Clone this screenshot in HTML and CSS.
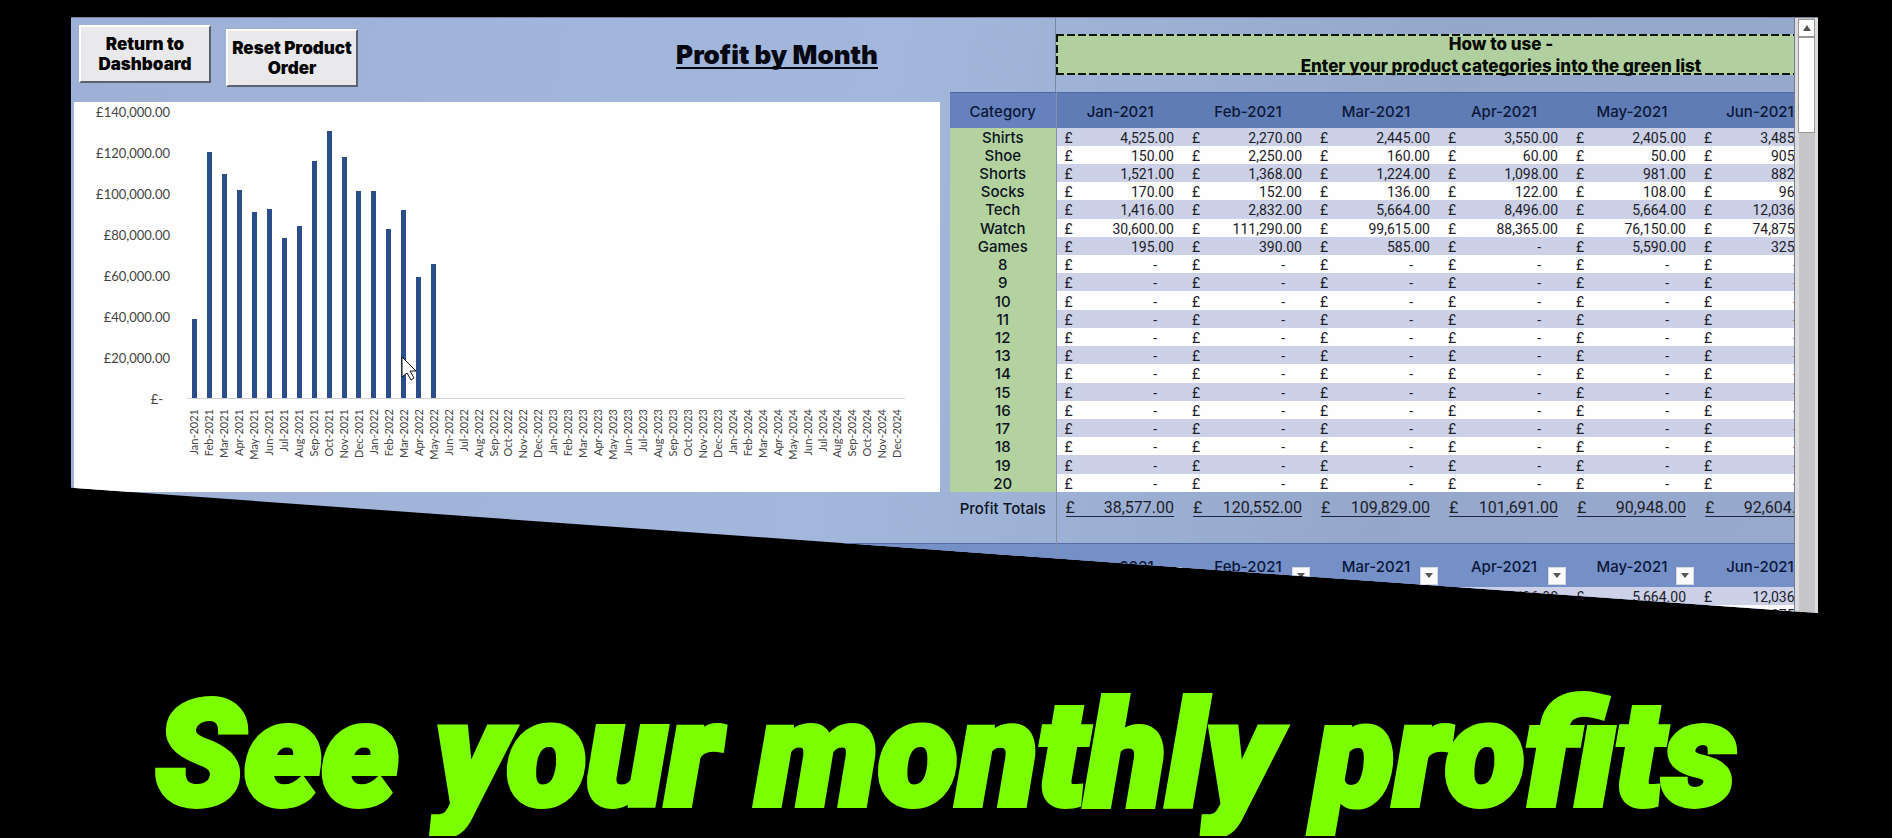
FILE: index.html
```html
<!DOCTYPE html>
<html lang="en">
<head>
  <meta charset="UTF-8">
  <meta name="viewport" content="width=device-width, initial-scale=1.0">
  <title>Profit by Month</title>
  <link rel="stylesheet" href="styles.css">
</head>
<body>

  <main class="sheet">
    <div class="sheet-main">

      <!-- Top bar: buttons, title and help note -->
      <div class="toolbar">
        <div class="toolbar-left">
          <button type="button" class="sheet-button">Return to Dashboard</button>
          <button type="button" class="sheet-button second">Reset Product Order</button>
          <h1>Profit by Month</h1>
        </div>
        <div class="toolbar-right">
          <p class="note"><span>How to use -<br>Enter your product categories into the green list</span></p>
        </div>
      </div>

      <!-- Chart + category table -->
      <div class="split">
        <section class="chart" aria-label="Profit by month chart">
          <div class="y-axis">
            <span>£140,000.00</span>
            <span>£120,000.00</span>
            <span>£100,000.00</span>
            <span>£80,000.00</span>
            <span>£60,000.00</span>
            <span>£40,000.00</span>
            <span>£20,000.00</span>
            <span class="zero">£-</span>
          </div>
          <div class="plot">
            <div class="bars" id="bars"></div>
            <div class="x-axis" id="xAxis"></div>
          </div>
          <svg class="cursor" viewBox="0 0 16 25" width="16" height="25">
            <path d="M1 1v20l5-4 4 7 3-2-4-7h6z" fill="#fff" stroke="#111" stroke-width="1"/>
          </svg>
        </section>

        <div class="table-pane">
          <table class="profit-table">
            <thead>
              <tr id="profitHead"><th class="category">Category</th></tr>
            </thead>
            <tbody id="profitBody"></tbody>
            <tfoot>
              <tr id="profitTotals"><th class="category">Profit Totals</th></tr>
            </tfoot>
          </table>
        </div>
      </div>

      <!-- Second table, with filter buttons -->
      <div class="split lower">
        <div class="lower-blank"></div>
        <div class="table-pane">
          <table class="filter-table">
            <thead>
              <tr id="filterHead"><th class="category"></th></tr>
            </thead>
            <tbody id="filterBody"></tbody>
          </table>
        </div>
      </div>
    </div>

    <div class="scrollbar">
      <button type="button" class="scroll-up" aria-label="Scroll up">
        <svg viewBox="0 0 8 6" width="8" height="6"><path d="M4 0l4 6H0z" fill="#555"/></svg>
      </button>
      <div class="scroll-thumb"></div>
    </div>
  </main>

  <p class="caption">See your monthly profits</p>

  <script>
    const names = ['Jan', 'Feb', 'Mar', 'Apr', 'May', 'Jun', 'Jul', 'Aug', 'Sep', 'Oct', 'Nov', 'Dec'];
    const years = [2021, 2022, 2023, 2024];
    const maxProfit = 140000;

    // Monthly profit, Jan-2021 onwards
    const profits = [
      38577, 120552, 109829, 101691, 90948, 92604, 78200, 84000, 116000,
      130600, 117900, 101300, 101300, 82800, 92200, 59200, 65400
    ];

    const categories = [
      ['Shirts', 4525, 2270, 2445, 3550, 2405, 3485],
      ['Shoe', 150, 2250, 160, 60, 50, 905],
      ['Shorts', 1521, 1368, 1224, 1098, 981, 882],
      ['Socks', 170, 152, 136, 122, 108, 96],
      ['Tech', 1416, 2832, 5664, 8496, 5664, 12036],
      ['Watch', 30600, 111290, 99615, 88365, 76150, 74875],
      ['Games', 195, 390, 585, 0, 5590, 325]
    ];
    for (let i = 8; i <= 20; i++) {
      categories.push([i, 0, 0, 0, 0, 0, 0]);
    }

    function money(value) {
      const text = value ? value.toLocaleString('en-GB', { minimumFractionDigits: 2 }) : '-';
      const cls = value ? 'money' : 'money empty';
      return `<td><div class="${cls}"><span>£</span><span>${text}</span></div></td>`;
    }

    // ===== Chart =====
    const bars = document.getElementById('bars');
    const xAxis = document.getElementById('xAxis');
    years.forEach((year, y) => {
      names.forEach((name, m) => {
        const value = profits[y * 12 + m] || 0;
        bars.innerHTML += `<div class="slot"><div class="bar" style="height: ${value / maxProfit * 100}%"></div></div>`;
        xAxis.innerHTML += `<div class="slot"><span>${name}-${year}</span></div>`;
      });
    });

    // ===== Tables =====
    const months = names.slice(0, 6).map(name => `${name}-2021`);
    document.getElementById('profitHead').innerHTML += months.map(m => `<th>${m}</th>`).join('');
    document.getElementById('profitBody').innerHTML = categories.map(([name, ...values]) =>
      `<tr><th class="category">${name}</th>${values.map(money).join('')}</tr>`).join('');
    document.getElementById('profitTotals').innerHTML += profits.slice(0, 6).map(money).join('');

    document.getElementById('filterHead').innerHTML += months.map(m =>
      `<th>${m}<button type="button" class="filter" aria-label="Filter ${m}"><svg viewBox="0 0 8 5" width="8" height="5"><path d="M0 0h8L4 5z" fill="#555"/></svg></button></th>`).join('');
    document.getElementById('filterBody').innerHTML = categories.slice(4, 6).map(([name, ...values]) =>
      `<tr><th class="category"></th>${values.map(money).join('')}</tr>`).join('');
  </script>
</body>
</html>
```
FILE: styles.css
```css
* {
  box-sizing: border-box;
}

body {
  margin: 0;
  background: #000;
  color: #0c1220;
  font-family: Inter, "Liberation Sans", sans-serif;
  overflow: hidden;
}

/* ====== SHEET ====== */
.sheet {
  display: flex;
  margin: 17px 74px 0 71px;
  background: linear-gradient(100deg, #9fb0d6 0%, #a3b7dc 45%, #95a8cc 75%, #98a9ce 100%);
  border-top: 1px solid #77809a;
  clip-path: polygon(0 0, 100% 0, 100% 100%, 0 79%);
}

.sheet-main {
  flex: 1;
  min-width: 0;
}

/* ====== TOP BAR ====== */
.toolbar {
  display: grid;
  grid-template-columns: minmax(0, 1fr) 739px;
  height: 74px;
}

.toolbar-left {
  display: flex;
  align-items: flex-start;
  gap: 15px;
  padding: 7px 0 0 8px;
}

.sheet-button {
  width: 132px;
  height: 58px;
  padding: 0;
  background: #e9e8ea;
  border: 2px solid;
  border-color: #fff #5b6170 #5b6170 #fff;
  color: #000;
  font-family: inherit;
  font-size: 17px;
  font-weight: 900;
  line-height: 20px;
}

.sheet-button.second {
  margin-top: 4px;
}

h1 {
  flex: 1;
  margin: 14px 0 0;
  padding-left: 126px;
  color: #04070f;
  font-size: 26px;
  font-weight: 900;
  line-height: 32px;
  text-align: center;
  text-decoration: underline;
  text-decoration-thickness: 2px;
  text-decoration-skip-ink: none;
  text-underline-offset: 3px;
}

.toolbar-right {
  overflow: hidden;
  padding-top: 16px;
  border-left: 1px solid #7c87a3;
}

.note {
  display: flex;
  align-items: center;
  justify-content: center;
  width: 890px;
  height: 41px;
  margin: 0;
  background:
    repeating-linear-gradient(90deg, #0c140c 0 8px, transparent 8px 11px) top / 100% 2px no-repeat,
    repeating-linear-gradient(90deg, #0c140c 0 8px, transparent 8px 11px) bottom / 100% 2px no-repeat,
    repeating-linear-gradient(#0c140c 0 8px, transparent 8px 11px) left / 2px 100% no-repeat,
    #b2d09f;
  color: #050a05;
  font-size: 17px;
  font-weight: 800;
  line-height: 22px;
  text-align: center;
}

/* ====== CHART + TABLE ====== */
.split {
  display: grid;
  grid-template-columns: minmax(0, 1fr) 844px;
}

.chart {
  position: relative;
  display: flex;
  height: 390px;
  margin: 10px 10px 0 3px;
  padding: 10px 35px 0 0;
  background: #fefefe;
  color: #444;
  font-family: Lato, "Liberation Sans", sans-serif;
}

.y-axis {
  display: flex;
  flex-direction: column;
  justify-content: space-between;
  width: 113px;
  height: 303px;
  margin-top: -8px;
  padding-right: 17px;
  font-size: 13px;
  line-height: 16px;
  text-align: right;
}

.y-axis .zero {
  padding-right: 7px;
}

.plot {
  flex: 1;
}

.bars,
.x-axis {
  display: flex;
}

.bars {
  height: 287px;
  border-bottom: 1px solid #d4d4d8;
}

.slot {
  display: flex;
  flex: 1;
  align-items: flex-end;
  justify-content: center;
}

.bar {
  width: 5px;
  background: #2a4d8c;
}

.x-axis .slot {
  align-items: flex-start;
  padding-top: 10px;
}

.x-axis span {
  font-size: 11px;
  line-height: 14px;
  writing-mode: vertical-rl;
  transform: rotate(180deg);
}

.cursor {
  position: absolute;
  top: 254px;
  left: 327px;
}

.table-pane {
  overflow: hidden;
}

table {
  width: 874px;
  table-layout: fixed;
  border-collapse: collapse;
}

th,
td {
  width: 128px;
  padding: 0;
}

th {
  font-size: 15px;
  font-weight: 500;
}

.category {
  width: 106px;
  border-right: 1px solid #8490a8;
}

thead th {
  height: 35px;
  padding-top: 3px;
  background: #5f7cb4;
  color: #0b1738;
}

thead .category {
  background: #6681bd;
}

.profit-table {
  height: 451px;
}

.profit-table thead th {
  border-top: 1px solid #4f6aa3;
}

tbody th,
tbody td {
  padding-top: 2px;
  line-height: 16px;
}

tbody .category {
  background: #b4d2a0;
}

tbody td {
  background: #fefefe;
}

tbody tr:nth-child(odd) td {
  background: #ccd1e7;
}

.money {
  display: flex;
  justify-content: space-between;
  padding: 0 10px 0 8px;
  color: #1d2029;
  font-family: Roboto, "Liberation Sans", sans-serif;
  font-size: 14px;
}

.money.empty {
  padding-right: 27px;
}

tfoot th,
tfoot td {
  height: 51px;
  padding-top: 7px;
  line-height: 20px;
  vertical-align: top;
}

tfoot .money {
  margin: 0 10px 0 9px;
  padding: 0;
  border-bottom: 1px solid #1d2540;
  font-size: 16px;
  line-height: 17px;
}

/* ====== LOWER TABLE ====== */
.lower {
  height: 70px;
  overflow: hidden;
  background: #758fc7;
}

.lower-blank,
.filter-table thead th {
  border-top: 1px solid #536da8;
}

.filter-table thead th {
  position: relative;
  height: 43px;
  background: #758fc7;
}

.filter {
  position: absolute;
  right: 2px;
  bottom: 2px;
  display: flex;
  align-items: center;
  justify-content: center;
  width: 18px;
  height: 18px;
  padding: 0;
  background: #fbfbfc;
  border: 1px solid #d5d8e0;
}

/* ====== SCROLLBAR ====== */
.scrollbar {
  display: flex;
  flex-direction: column;
  align-items: center;
  width: 24px;
  padding-top: 1px;
  background: linear-gradient(90deg, #dcdcde 0 4px, #c6c6c8 4px 20px, #dcdcde 20px);
  border-left: 1px solid #777d8c;
}

.scroll-up,
.scroll-thumb {
  width: 17px;
  background: #fefefe;
  border: 1px solid #999;
}

.scroll-up {
  display: flex;
  align-items: center;
  justify-content: center;
  height: 18px;
  padding: 0;
}

.scroll-thumb {
  height: 96px;
}

/* ====== CAPTION ====== */
.caption {
  margin: 63px 0 0;
  color: #7bff00;
  font-family: Impact, "Liberation Sans Narrow", Roboto, sans-serif;
  font-size: 146px;
  font-style: italic;
  font-weight: 900;
  line-height: 160px;
  text-align: center;
  white-space: nowrap;
  -webkit-text-stroke: 6px #7bff00;
}
```
